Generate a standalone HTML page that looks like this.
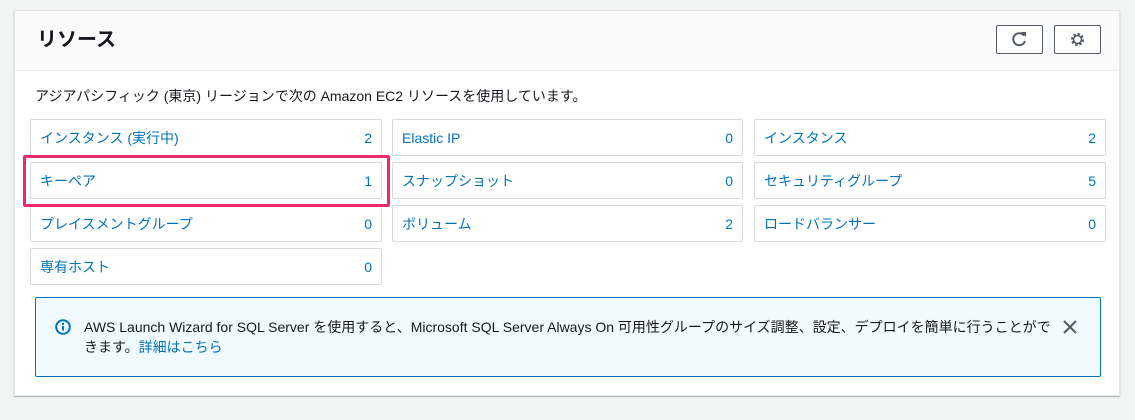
<!DOCTYPE html>
<html><head><meta charset="utf-8"><style>
body{margin:0;width:1135px;height:420px;background:#f2f3f3;font-family:"Liberation Sans","Noto Sans CJK JP",sans-serif;position:relative;overflow:hidden}
.card{position:absolute;left:14px;top:10px;width:1106px;height:386px;background:#fff;border:1px solid #e4e6e6;box-shadow:0 1px 1px rgba(0,28,36,.3);box-sizing:border-box}
.hdr{position:absolute;left:0;top:0;right:0;height:59px;background:#fafafa;border-bottom:1px solid #eaeded}
.title{position:absolute;left:22px;top:16px;font-size:20px;line-height:26px;font-weight:bold;color:#16191f}
.btn{position:absolute;top:14px;width:47px;height:29px;border:1px solid #545b64;border-radius:2px;background:#fff;box-sizing:border-box}
.desc{position:absolute;left:35px;top:87px;font-size:14px;line-height:18px;color:#16191f}
.it{position:absolute;height:37px;border:1px solid #d5dbdb;border-radius:2px;background:#fff;box-sizing:border-box;font-size:14px;line-height:18px;color:#0073bb;display:flex;align-items:center;justify-content:space-between;padding:0 9px}
.it b{font-weight:normal}
.pink{position:absolute;left:23px;top:155px;width:367px;height:52px;border:3px solid #ee2a6d;box-sizing:border-box;border-radius:2px}
.info{position:absolute;left:35px;top:297px;width:1066px;height:80px;background:#f1faff;border:1px solid #0073bb;box-sizing:border-box;border-radius:2px;font-size:14px;color:#16191f}
</style></head><body>
<div class="card"><div class="hdr"><div class="title">リソース</div>
<div class="btn" style="left:981px"><svg width="45" height="27" viewBox="0 0 45 27"><path d="M27 9.5A6 6 0 1 0 28 15" fill="none" stroke="#545b64" stroke-width="2"/><path d="M24 6h5v5z" fill="#545b64"/></svg></div>
<div class="btn" style="left:1039px"><svg width="45" height="27" viewBox="0 0 45 27"><circle cx="22.5" cy="13.5" r="5" fill="none" stroke="#545b64" stroke-width="3" stroke-dasharray="2.2 1.7"/><circle cx="22.5" cy="13.5" r="4" fill="none" stroke="#545b64" stroke-width="1.6"/></svg></div>
</div></div>
<div class="desc">アジアパシフィック (東京) リージョンで次の Amazon EC2 リソースを使用しています。</div>
<div class="it" style="left:30px;top:119px;width:352px"><span>インスタンス (実行中)</span><b>2</b></div>
<div class="it" style="left:392px;top:119px;width:351px"><span>Elastic IP</span><b>0</b></div>
<div class="it" style="left:754px;top:119px;width:352px"><span>インスタンス</span><b>2</b></div>
<div class="it" style="left:30px;top:162px;width:352px"><span>キーペア</span><b>1</b></div>
<div class="it" style="left:392px;top:162px;width:351px"><span>スナップショット</span><b>0</b></div>
<div class="it" style="left:754px;top:162px;width:352px"><span>セキュリティグループ</span><b>5</b></div>
<div class="it" style="left:30px;top:205px;width:352px"><span>プレイスメントグループ</span><b>0</b></div>
<div class="it" style="left:392px;top:205px;width:351px"><span>ボリューム</span><b>2</b></div>
<div class="it" style="left:754px;top:205px;width:352px"><span>ロードバランサー</span><b>0</b></div>
<div class="it" style="left:30px;top:248px;width:352px"><span>専有ホスト</span><b>0</b></div>
<div class="pink"></div>
<div class="info">
<svg style="position:absolute;left:19px;top:21px" width="16" height="16" viewBox="0 0 16 16"><circle cx="8" cy="8" r="6.8" fill="none" stroke="#0073bb" stroke-width="2"/><rect x="7" y="7" width="2" height="4.5" fill="#0073bb"/><rect x="7" y="4" width="2" height="2" fill="#0073bb"/></svg>
<div style="position:absolute;left:48px;top:19px;line-height:20px;width:970px">AWS Launch Wizard for SQL Server を使用すると、Microsoft SQL Server Always On 可用性グループのサイズ調整、設定、デプロイを簡単に行うことがで<br>きます。<span style="color:#0073bb">詳細はこちら</span></div>
<svg style="position:absolute;left:1027px;top:22px" width="14" height="14" viewBox="0 0 14 14"><path d="M1 1L13 13M13 1L1 13" stroke="#545b64" stroke-width="2"/></svg>
</div>
</body></html>
